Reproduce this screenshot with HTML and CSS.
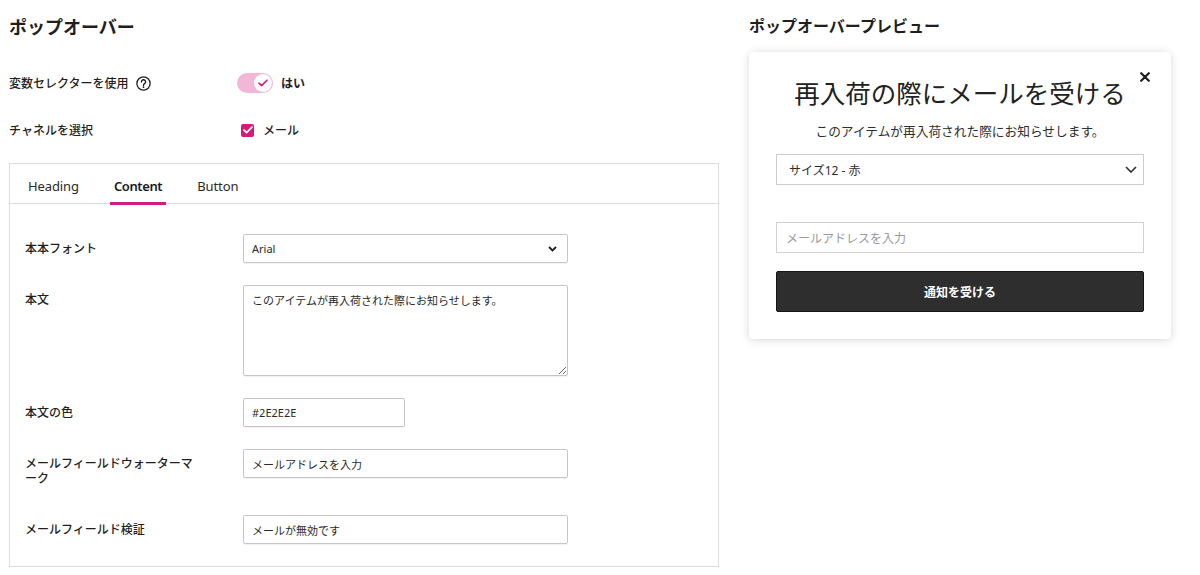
FILE: index.html
```html
<!DOCTYPE html>
<html lang="ja">
<head>
<meta charset="utf-8">
<link rel="stylesheet" href="styles.css">
</head>
<body>
<div class="page">
  <section class="left">
    <h1 class="title">ポップオーバー</h1>
    <div class="setting-row first">
      <div class="setting-label">変数セレクターを使用
        <svg class="help" width="15" height="15" viewBox="0 0 15 15"><circle cx="7.5" cy="7.5" r="6.6" fill="none" stroke="#1f1f1f" stroke-width="1.3"/><path d="M5.4 5.9a2.1 2.1 0 1 1 3.1 1.8c-.7.4-1 .8-1 1.5v.4" fill="none" stroke="#1f1f1f" stroke-width="1.4" stroke-linecap="round"/><circle cx="7.5" cy="11.2" r=".85" fill="#1f1f1f"/></svg>
      </div>
      <div class="toggle"><span class="knob"><svg width="10" height="8" viewBox="0 0 10 8"><path d="M1 4.2l2.6 2.4L9 1.2" fill="none" stroke="#d31b7d" stroke-width="1.6" stroke-linecap="round" stroke-linejoin="round"/></svg></span></div>
      <span class="setting-value">はい</span>
    </div>
    <div class="setting-row second">
      <div class="setting-label">チャネルを選択</div>
      <span class="checkbox"><svg width="10" height="8" viewBox="0 0 10 8"><path d="M1 4.2l2.6 2.4L9 1.2" fill="none" stroke="#fff" stroke-width="1.7" stroke-linecap="round" stroke-linejoin="round"/></svg></span>
      <span class="setting-value light">メール</span>
    </div>
    <div class="panel">
      <div class="tabs">
        <div class="tab">Heading</div>
        <div class="tab active">Content</div>
        <div class="tab">Button</div>
      </div>
      <div class="form">
        <div class="form-row">
          <div class="form-label">本本フォント</div>
          <div class="field select">Arial
            <svg width="9" height="6" viewBox="0 0 9 6"><path d="M1 1l3.5 3.5L8 1" fill="none" stroke="#1f1f1f" stroke-width="1.8"/></svg>
          </div>
        </div>
        <div class="form-row">
          <div class="form-label">本文</div>
          <textarea class="field area" readonly>このアイテムが再入荷された際にお知らせします。</textarea>
        </div>
        <div class="form-row">
          <div class="form-label">本文の色</div>
          <div class="field short">#2E2E2E</div>
        </div>
        <div class="form-row">
          <div class="form-label">メールフィールドウォーターマーク</div>
          <div class="field">メールアドレスを入力</div>
        </div>
        <div class="form-row">
          <div class="form-label">メールフィールド検証</div>
          <div class="field">メールが無効です</div>
        </div>
      </div>
    </div>
  </section>
  <section class="right">
    <h2 class="preview-title">ポップオーバープレビュー</h2>
    <div class="card">
      <svg class="close" width="10" height="10" viewBox="0 0 10 10"><path d="M1.2 1.2l7.6 7.6M8.8 1.2L1.2 8.8" stroke="#1f1f1f" stroke-width="2.2" stroke-linecap="round"/></svg>
      <div class="pop-heading">再入荷の際にメールを受ける</div>
      <div class="pop-text">このアイテムが再入荷された際にお知らせします。</div>
      <div class="pop-select">サイズ12 - 赤
        <svg width="12" height="7" viewBox="0 0 12 7"><path d="M1 1l5 5 5-5" fill="none" stroke="#2e2e2e" stroke-width="1.6"/></svg>
      </div>
      <div class="pop-input">メールアドレスを入力</div>
      <div class="pop-button">通知を受ける</div>
    </div>
  </section>
</div>
</body>
</html>
```

FILE: styles.css
```css
* { box-sizing: border-box; }
body {
  margin: 0;
  background: #fff;
  color: #1f1f1f;
  font-family: "Noto Sans", "Noto Sans CJK JP", sans-serif;
}
.page {
  display: flex;
  gap: 30px;
  padding-left: 9px;
  width: 1200px;
}
.left { width: 710px; }
.right { width: 422px; }

.title {
  margin: 0;
  padding-top: 15px;
  font-size: 18px;
  line-height: 24px;
  font-weight: 700;
}
.setting-row {
  display: flex;
  align-items: center;
  height: 24px;
}
.setting-row.first { margin-top: 32px; }
.setting-row.second { margin-top: 23px; }
.setting-label {
  width: 228px;
  display: flex;
  align-items: center;
  gap: 7px;
  font-size: 12px;
  font-weight: 500;
}
.help { display: block; }
.toggle {
  width: 36px;
  height: 20px;
  border-radius: 10px;
  background: #f2b6d6;
  display: flex;
  justify-content: flex-end;
  align-items: center;
  padding: 1px;
}
.knob {
  width: 18px;
  height: 18px;
  border-radius: 50%;
  background: #fff;
  display: flex;
  align-items: center;
  justify-content: center;
}
.setting-value {
  margin-left: 8px;
  font-size: 12px;
  font-weight: 700;
}
.setting-value.light { font-weight: 500; margin-left: 9px; }
.checkbox {
  margin-left: 4px;
  width: 13px;
  height: 13px;
  border-radius: 2px;
  background: #d31b7d;
  display: flex;
  align-items: center;
  justify-content: center;
}

.panel {
  margin-top: 21px;
  border: 1px solid #dddddd;
}
.tabs {
  display: flex;
  gap: 27px;
  height: 40px;
  padding-left: 14px;
  border-bottom: 1px solid #dddddd;
}
.tab {
  height: 41px;
  margin-bottom: -1px;
  padding: 6px 4px 0;
  line-height: 32px;
  font-size: 13px;
  letter-spacing: -0.1px;
  color: #2a2a2a;
  border-bottom: 3px solid transparent;
}
.tab.active {
  font-weight: 600;
  letter-spacing: -0.4px;
  color: #1a1a1a;
  border-bottom-color: #d31b7d;
}
.form {
  display: flex;
  flex-direction: column;
  gap: 22px;
  padding: 30px 15px 22px;
}
.form-row { display: flex; align-items: flex-start; }
.form-label {
  width: 218px;
  padding: 7px 46px 7px 0;
  font-size: 12px;
  line-height: 15px;
  font-weight: 500;
  line-break: loose;
}
.field {
  width: 325px;
  height: 29px;
  border: 1px solid #c6c6c6;
  border-radius: 2px;
  padding: 0 8px;
  display: flex;
  align-items: center;
  font-size: 11px;
  color: #2a2a2a;
  box-shadow: 0 1px 1px rgba(0,0,0,0.06);
}
.field.short { width: 162px; }
.field.select { justify-content: space-between; padding-right: 10px; }
.field.area {
  display: block;
  height: 91px;
  padding: 7px 8px;
  line-height: 15px;
  font-family: "Noto Sans", "Noto Sans CJK JP", sans-serif;
  resize: vertical;
  outline: none;
}

.preview-title {
  margin: 0;
  padding-top: 15px;
  font-size: 16px;
  line-height: 22px;
  font-weight: 700;
}
.card {
  position: relative;
  margin-top: 15px;
  border-radius: 4px;
  box-shadow: 0 1px 8px rgba(0,0,0,0.16);
  padding: 22px 27px 27px;
}
.close {
  position: absolute;
  top: 20px;
  right: 21px;
}
.pop-heading {
  text-align: center;
  font-size: 25.5px;
  line-height: 38px;
  color: #222;
}
.pop-text {
  margin-top: 9px;
  text-align: center;
  font-size: 12.7px;
  line-height: 20px;
  color: #2e2e2e;
}
.pop-select {
  margin-top: 13px;
  height: 31px;
  border: 1px solid #cccccc;
  padding: 0 6px 0 12px;
  display: flex;
  align-items: center;
  justify-content: space-between;
  font-size: 12px;
  color: #2e2e2e;
}
.pop-input {
  margin-top: 37px;
  height: 31px;
  border: 1px solid #d0d0d0;
  padding: 0 9px;
  display: flex;
  align-items: center;
  font-size: 12px;
  color: #9a9a9a;
}
.pop-button {
  margin-top: 18px;
  height: 41px;
  background: #2e2e2e;
  border: 1px solid #151515;
  border-radius: 2px;
  color: #fff;
  font-size: 12px;
  font-weight: 700;
  display: flex;
  align-items: center;
  justify-content: center;
}
```
